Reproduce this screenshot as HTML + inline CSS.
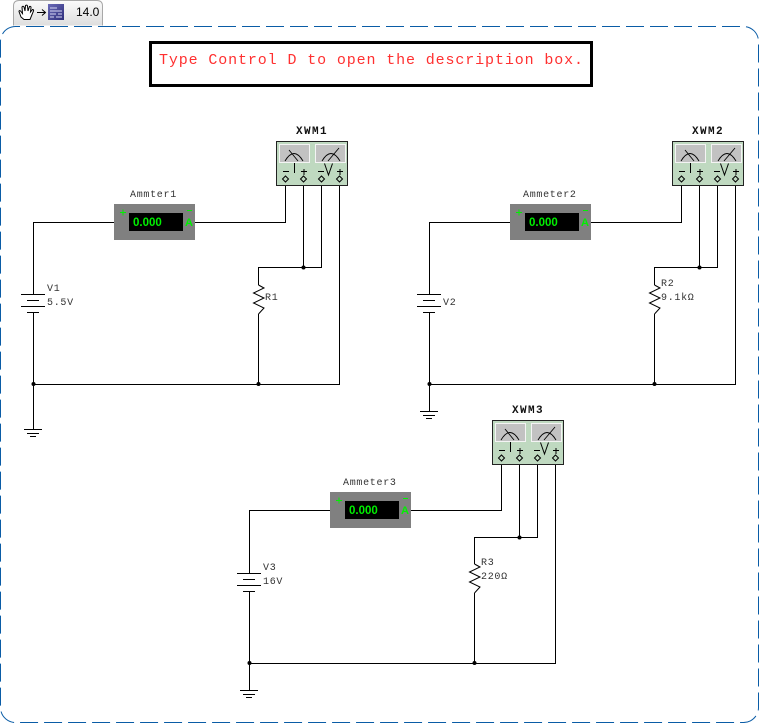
<!DOCTYPE html>
<html>
<head>
<meta charset="utf-8">
<style>
html,body{margin:0;padding:0;background:#fff;width:759px;height:723px;overflow:hidden}
svg{display:block}
text{font-family:"Liberation Mono",monospace}
.w{stroke:#000;stroke-width:1;fill:none;shape-rendering:crispEdges}
.z{stroke:#000;stroke-width:1;fill:none}
.lab{font-size:10px;fill:#333;letter-spacing:.7px}
.xwm{font-size:11px;font-weight:bold;fill:#111;letter-spacing:1.4px}
.d{font-family:"Liberation Sans",sans-serif;font-size:11.5px;font-weight:bold;fill:#00f000}
.a{font-family:"Liberation Sans",sans-serif;font-size:11px;font-weight:bold;fill:#00f000}
</style>
</head>
<body>
<svg width="759" height="723" viewBox="0 0 759 723" xmlns="http://www.w3.org/2000/svg">
<defs>
<linearGradient id="tab" x1="0" y1="0" x2="0" y2="1"><stop offset="0" stop-color="#fbfbfb"/><stop offset="1" stop-color="#dedede"/></linearGradient>
<linearGradient id="ic" x1="0" y1="0" x2="1" y2="1"><stop offset="0" stop-color="#6a6ab8"/><stop offset="1" stop-color="#2e2e7a"/></linearGradient>
<g id="xw">
<rect x="276.500" y="141.500" width="71" height="44" fill="#bfd9c0" stroke="#222"/>
<rect x="279.500" y="144.500" width="30" height="18" fill="#c2c2c2" stroke="#f4f4f4"/>
<rect x="315.500" y="144.500" width="30" height="18" fill="#c2c2c2" stroke="#f4f4f4"/>
<path d="M285 161Q294 146 303 161M289 150L298 161" fill="none" stroke="#000" stroke-width=".9"/>
<path d="M322 161Q331 146 340 161M328 161L339 148" fill="none" stroke="#000" stroke-width=".9"/>
<path class="w" d="M283 171.500h6M301 171.500h6M304 169v6M337 171.500h6M340 169v6M318 171.500h6M294.500 163v10"/>
<path d="M324.500 163.500L328.500 175L332.500 163.500" fill="none" stroke="#000" stroke-width="1"/>
<g fill="none" stroke="#000" stroke-width="1">
<path d="M285.500 176l3 3l-3 3l-3-3z"/>
<path d="M303.500 176l3 3l-3 3l-3-3z"/>
<path d="M321.500 176l3 3l-3 3l-3-3z"/>
<path d="M339.500 176l3 3l-3 3l-3-3z"/>
</g>
</g>
<g id="am">
<rect x="114" y="204" width="81" height="36" fill="#808080"/>
<rect x="129" y="213" width="54" height="18" fill="#000"/>
<path d="M120 212.500h6M123 209.500v6M187 210.500h5" fill="none" stroke="#00f000" stroke-width="1" shape-rendering="crispEdges"/>
</g>
<g id="bat">
<path class="w" d="M33.500 222V294M21 294.500H45M27 300.500H39M21 306.500H45M27 312.500H39M33.500 313V384"/>
</g>
<g id="gnd">
<path class="w" d="M33.500 384V429M24 429.500H42M27 433.500H39M30 436.500H36"/>
</g>
<g id="gnd2">
<path class="w" d="M33.500 384V411M24 411.500H42M27 415.500H39M30 418.500H36"/>
</g>
<g id="res">
<path class="z" d="M258.500 285L264 288L253.500 293L264 298L253.500 303L264 308L258.500 314"/>
</g>
<g id="wires">
<path class="w" d="M33.500 222.500H114M195 222.500H285.500V185M303.500 185V267.500M321.500 185V267.500H258.500V285M258.500 314V384.500M339.500 185V384.500H33.500"/>
<circle cx="303.500" cy="267.500" r="2" fill="#000"/>
<circle cx="33.500" cy="384" r="2" fill="#000"/>
<circle cx="258.500" cy="384" r="2" fill="#000"/>
</g>
</defs>

<!-- frame -->
<path d="M16 26.500H743A15 15 0 0 1 758.500 41.500V707A15 15 0 0 1 743 722.500H16A15 15 0 0 1 .5 707V41.500A15 15 0 0 1 16 26.500Z" fill="none" stroke="#0a5ca6" stroke-width="1" stroke-dasharray="18 6" stroke-dashoffset="14"/>

<!-- tab -->
<path d="M13.500 25.500V6Q13.500 .5 19 .5H97Q102.500 .5 102.500 6V25.500" fill="url(#tab)" stroke="#a8a8a8"/>
<path d="M21 17L19 11.500Q19 10 20.500 11L22.500 13.500L22 7Q23 5.500 24 7L25 11L25.500 5.500Q27 4.500 27.500 6L28 11L29.500 6.500Q31 6 31 7.500L30.500 12L32.500 9.500Q34 9.500 33.500 11L30 19.500H24Z" fill="#fff" stroke="#000" stroke-width="1"/>
<path d="M37 12.500H45M42 9.500L45.500 12.500L42 15.500" fill="none" stroke="#000" stroke-width="1"/>
<rect x="48" y="4" width="16" height="16" fill="url(#ic)"/>
<path d="M50 8h7M50 11h12M50 14h6M58 14h4M50 17h4M56 17h6" fill="none" stroke="#d8d8f4" stroke-width="1" shape-rendering="crispEdges"/>
<text x="76" y="16" style="font-family:'Liberation Sans',sans-serif;font-size:12px;fill:#000">14.0</text>

<!-- description -->
<rect x="150.500" y="42.500" width="441" height="43" fill="#fff" stroke="#000" stroke-width="3"/>
<text x="159" y="64" fill="#ff3030" textLength="424" lengthAdjust="spacing" style="font-size:15px">Type Control D to open the description box.</text>

<!-- circuit 1 -->
<g><use href="#wires"/><use href="#am"/><use href="#xw"/><use href="#bat"/><use href="#gnd"/><use href="#res"/></g>
<!-- circuit 2 -->
<g transform="translate(396 0)"><use href="#wires"/><use href="#am"/><use href="#xw"/><use href="#bat"/><use href="#gnd2"/><use href="#res"/></g>
<!-- circuit 3 -->
<g transform="translate(216 279)">
<path class="w" d="M33.500 231.500H114M195 231.500H285.500V185M303.500 185V258.500M321.500 185V258.500H258.500V285M258.500 314V384.500M339.500 185V384.500H33.500"/>
<circle cx="303.500" cy="258.500" r="2" fill="#000"/>
<circle cx="33.500" cy="384" r="2" fill="#000"/>
<circle cx="258.500" cy="384" r="2" fill="#000"/>
<g transform="translate(0 9)"><use href="#am"/></g>
<use href="#xw"/>
<path class="w" d="M33.500 231V294M21 294.500H45M27 300.500H39M21 306.500H45M27 312.500H39M33.500 313V384"/>
<use href="#gnd2"/><use href="#res"/>
</g>

<!-- readings -->
<text class="d" x="133" y="226">0.000</text>
<text class="d" x="529" y="226">0.000</text>
<text class="d" x="349" y="514">0.000</text>
<text class="a" x="185" y="226">A</text>
<text class="a" x="581" y="226">A</text>
<text class="a" x="401" y="514">A</text>

<!-- labels -->
<text class="lab" x="130" y="197">Ammter1</text>
<text class="lab" x="523" y="197">Ammeter2</text>
<text class="lab" x="343" y="485">Ammeter3</text>
<text class="xwm" x="296" y="134">XWM1</text>
<text class="xwm" x="692" y="134">XWM2</text>
<text class="xwm" x="512" y="413">XWM3</text>
<text class="lab" x="47" y="291">V1</text>
<text class="lab" x="47" y="305">5.5V</text>
<text class="lab" x="443" y="305">V2</text>
<text class="lab" x="263" y="570">V3</text>
<text class="lab" x="263" y="584">16V</text>
<text class="lab" x="265" y="300">R1</text>
<text class="lab" x="661" y="286">R2</text>
<text class="lab" x="661" y="300">9.1kΩ</text>
<text class="lab" x="481" y="565">R3</text>
<text class="lab" x="481" y="579">220Ω</text>
</svg>
</body>
</html>
